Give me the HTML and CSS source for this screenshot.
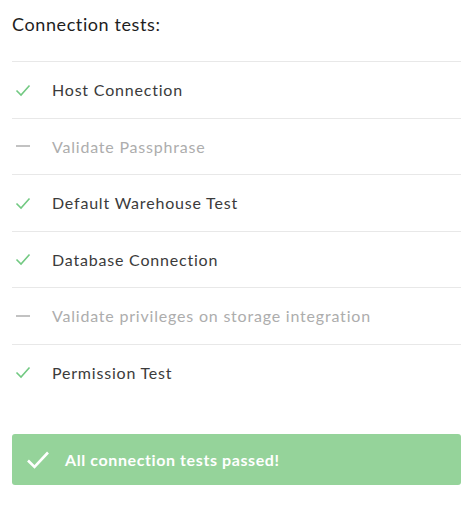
FILE: index.html
```html
<!DOCTYPE html>
<html>
<head>
<meta charset="utf-8">
<link rel="stylesheet" href="styles.css">
</head>
<body>
<div class="panel">
  <h2 class="title">Connection tests:</h2>
  <ul class="tests">
    <li class="test pass">
      <svg class="icon" viewBox="0 0 16 16"><path d="M1.5 8.5 L6 13 L14.5 3.5" /></svg>
      <span>Host Connection</span>
    </li>
    <li class="test skip">
      <svg class="icon" viewBox="0 0 16 16"><path d="M1 8 H15" /></svg>
      <span>Validate Passphrase</span>
    </li>
    <li class="test pass">
      <svg class="icon" viewBox="0 0 16 16"><path d="M1.5 8.5 L6 13 L14.5 3.5" /></svg>
      <span>Default Warehouse Test</span>
    </li>
    <li class="test pass">
      <svg class="icon" viewBox="0 0 16 16"><path d="M1.5 8.5 L6 13 L14.5 3.5" /></svg>
      <span>Database Connection</span>
    </li>
    <li class="test skip">
      <svg class="icon" viewBox="0 0 16 16"><path d="M1 8 H15" /></svg>
      <span>Validate privileges on storage integration</span>
    </li>
    <li class="test pass">
      <svg class="icon" viewBox="0 0 16 16"><path d="M1.5 8.5 L6 13 L14.5 3.5" /></svg>
      <span>Permission Test</span>
    </li>
  </ul>
  <div class="banner">
    <svg class="banner-icon" viewBox="0 0 24 24"><path d="M2 12.5 L8.5 19 L22 4.5" /></svg>
    <span>All connection tests passed!</span>
  </div>
</div>
</body>
</html>
```
FILE: styles.css
```css
body {
  margin: 0;
  background: #ffffff;
  font-family: Lato, "Noto Sans", sans-serif;
}

.panel {
  padding: 12px 13px 0 12px;
}

.title {
  margin: 0;
  font-size: 18px;
  font-weight: 400;
  color: #1e1e1e;
  line-height: 24px;
  letter-spacing: 0.6px;
}

.tests {
  list-style: none;
  margin: 25px 0 0 0;
  padding: 0;
  border-top: 1px solid #e8e8e8;
}

.test {
  display: flex;
  align-items: center;
  height: 55.5px;
  border-bottom: 1px solid #e8e8e8;
  font-size: 16px;
  letter-spacing: 0.8px;
}

.test:last-child {
  border-bottom: none;
}

.test .icon {
  width: 16px;
  height: 16px;
  margin: 0 21px 0 3px;
  fill: none;
  stroke-width: 1.6;
}

.pass {
  color: #3b3b3b;
}

.pass .icon {
  stroke: #72c982;
}

.skip {
  color: #adadad;
}

.skip .icon {
  stroke: #b3b3b3;
}

.banner {
  margin-top: 34px;
  height: 51px;
  background: #95d39a;
  border-radius: 3px;
  display: flex;
  align-items: center;
  color: #ffffff;
  font-size: 16px;
  font-weight: 700;
  letter-spacing: 0.6px;
}

.banner-icon {
  width: 24px;
  height: 24px;
  margin: 0 15px 0 14px;
  fill: none;
  stroke: #ffffff;
  stroke-width: 2.6;
}
```
